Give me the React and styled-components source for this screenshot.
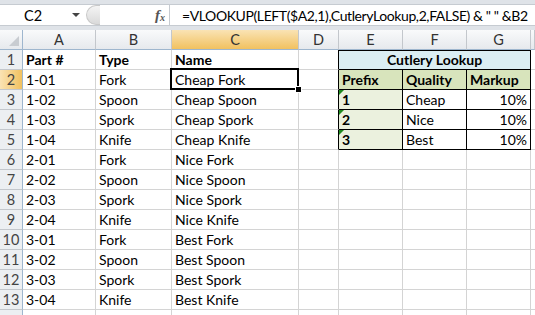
import React from "react";
import styled, { createGlobalStyle, css } from "styled-components";

const GlobalStyle = createGlobalStyle`
  body {
    margin: 0;
    background: #ffffff;
    font-family: Lato, "Open Sans", sans-serif;
    overflow: hidden;
  }
`;

const Container = styled.div`
  width: 535px;
  height: 315px;
  overflow: hidden;
  background: #ffffff;
`;

const TopStrip = styled.div`
  height: 4px;
  background: #dfe3e8;
  border-bottom: 1px solid #c6cbd1;
`;

const FormulaBar = styled.div`
  display: flex;
  height: 20px;
  background: #ffffff;
`;

const NameBox = styled.div`
  width: 86px;
  display: flex;
  align-items: center;
  padding-left: 24px;
  box-sizing: border-box;
  font-size: 14.5px;
  color: #000;
  position: relative;
`;

const DropArrow = styled.span`
  position: absolute;
  left: 72px;
  top: 8px;
  width: 0;
  height: 0;
  border-left: 4px solid transparent;
  border-right: 4px solid transparent;
  border-top: 4px solid #444;
`;

const Splitter = styled.div`
  width: 14px;
  display: flex;
  align-items: center;
`;

const Knob = styled.div`
  width: 14px;
  height: 20px;
  border-radius: 10px 0 0 10px;
  background: linear-gradient(#f4f4f4, #d9d9d9);
  border: 1px solid #c9c9c9;
  border-right: none;
  box-sizing: border-box;
`;

const FxArea = styled.div`
  width: 70px;
  display: flex;
  align-items: center;
  justify-content: flex-end;
  padding-right: 4px;
  box-sizing: border-box;
  font-family: "Liberation Serif", serif;
  font-style: italic;
  font-weight: bold;
  font-size: 15px;
  color: #555;
  border-right: 1px solid #c6cbd1;

  small {
    font-size: 10px;
    position: relative;
    top: 2px;
  }
`;

const FormulaText = styled.div`
  flex: 1;
  display: flex;
  align-items: center;
  padding-left: 12px;
  font-size: 14px;
  letter-spacing: -0.4px;
  color: #000;
  white-space: nowrap;
  overflow: hidden;
`;

const Gap = styled.div`
  height: 4px;
  background: #dfe3e8;
  border-top: 1px solid #c6cbd1;
`;

const Sheet = styled.div`
  display: grid;
  grid-template-columns: 23px 73px 76px 127px 40px 64px 64px 64px 4px;
  grid-auto-rows: 20px;
`;

const headerBase = css`
  box-sizing: border-box;
  display: flex;
  align-items: center;
  justify-content: center;
  font-size: 14.5px;
  color: #333;
  border-right: 1px solid #c3c7cc;
  border-bottom: 1px solid #9eb6ce;
  background: ${(p) =>
    p.$active
      ? "linear-gradient(#fae3b4, #f1c15f)"
      : "linear-gradient(#f9fafb, #e6e9ed)"};
`;

const ColHeader = styled.div`
  ${headerBase}
`;

const RowHeader = styled.div`
  ${headerBase}
  border-bottom: 1px solid #c3c7cc;
  border-right: 1px solid #9eb6ce;
  color: #444;
  background: ${(p) =>
    p.$active
      ? "linear-gradient(90deg, #fae3b4, #f1c15f)"
      : "#eceff2"};
`;

const Corner = styled.div`
  ${headerBase}
  position: relative;
  border-right: 1px solid #9eb6ce;

  &::after {
    content: "";
    position: absolute;
    right: 3px;
    bottom: 3px;
    border-left: 10px solid transparent;
    border-bottom: 10px solid #c8ccd1;
  }
`;

const Cell = styled.div`
  box-sizing: border-box;
  position: relative;
  display: flex;
  align-items: center;
  justify-content: ${(p) =>
    p.$align === "right" ? "flex-end" : p.$align === "center" ? "center" : "flex-start"};
  padding: 0 3px;
  font-size: 14px;
  line-height: 20px;
  color: #000;
  white-space: nowrap;
  overflow: visible;
  font-weight: ${(p) => (p.$bold ? 700 : 400)};
  background: ${(p) => p.$bg || "#ffffff"};
  border-right: 1px solid ${(p) => (p.$edgeR ? "#000" : "#d4d4d4")};
  border-bottom: 1px solid ${(p) => (p.$edgeB ? "#000" : "#d4d4d4")};
  ${(p) => p.$span && `grid-column: span ${p.$span};`}
  ${(p) => p.$edgeT && "box-shadow: inset 0 1px 0 #000;"}

  ${(p) =>
    p.$note &&
    css`
      &::before {
        content: "";
        position: absolute;
        left: 0;
        top: 0;
        border-top: 5px solid #1e8a1e;
        border-right: 5px solid transparent;
      }
    `}

  ${(p) =>
    p.$selected &&
    css`
      &::after {
        content: "";
        position: absolute;
        left: -2px;
        top: -2px;
        right: -1px;
        bottom: -1px;
        border: 2px solid #000;
        pointer-events: none;
      }
    `}
`;

const Handle = styled.span`
  position: absolute;
  right: -4px;
  bottom: -4px;
  width: 5px;
  height: 5px;
  background: #000;
  border: 1px solid #fff;
  z-index: 2;
`;

const parts = [
  ["1-01", "Fork", "Cheap Fork"],
  ["1-02", "Spoon", "Cheap Spoon"],
  ["1-03", "Spork", "Cheap Spork"],
  ["1-04", "Knife", "Cheap Knife"],
  ["2-01", "Fork", "Nice Fork"],
  ["2-02", "Spoon", "Nice Spoon"],
  ["2-03", "Spork", "Nice Spork"],
  ["2-04", "Knife", "Nice Knife"],
  ["3-01", "Fork", "Best Fork"],
  ["3-02", "Spoon", "Best Spoon"],
  ["3-03", "Spork", "Best Spork"],
  ["3-04", "Knife", "Best Knife"],
];

const lookup = [
  ["1", "Cheap", "10%"],
  ["2", "Nice", "10%"],
  ["3", "Best", "10%"],
];

const columns = ["A", "B", "C", "D", "E", "F", "G", ""];

const OLIVE = "#d8e4bc";
const PALE = "#ebf1de";
const BLUE = "#dbeef3";

function lookupCells(r) {
  // r is the sheet row number (1-based)
  if (r === 1) {
    return (
      <Cell $span={3} $bg={BLUE} $bold $align="center" $edgeR $edgeB $edgeT>
        Cutlery Lookup
      </Cell>
    );
  }
  if (r === 2) {
    return (
      <>
        <Cell $bg={OLIVE} $bold $edgeR $edgeB>Prefix</Cell>
        <Cell $bg={OLIVE} $bold $edgeR $edgeB>Quality</Cell>
        <Cell $bg={OLIVE} $bold $edgeR $edgeB>Markup</Cell>
      </>
    );
  }
  const row = lookup[r - 3];
  if (row) {
    return (
      <>
        <Cell $bg={PALE} $bold $note $edgeR $edgeB>{row[0]}</Cell>
        <Cell $edgeR $edgeB>{row[1]}</Cell>
        <Cell $align="right" $edgeR $edgeB>{row[2]}</Cell>
      </>
    );
  }
  return (
    <>
      <Cell />
      <Cell />
      <Cell />
    </>
  );
}

export default function App() {
  const rows = [];
  for (let r = 1; r <= 14; r++) {
    let a = "";
    let b = "";
    let c = "";
    let bold = false;
    if (r === 1) {
      a = "Part #";
      b = "Type";
      c = "Name";
      bold = true;
    } else if (parts[r - 2]) {
      [a, b, c] = parts[r - 2];
    }
    const inTable = r <= 5;
    rows.push(
      <React.Fragment key={r}>
        <RowHeader $active={r === 2}>{r < 14 ? r : ""}</RowHeader>
        <Cell $bold={bold}>{a}</Cell>
        <Cell $bold={bold}>{b}</Cell>
        <Cell $bold={bold} $selected={r === 2}>
          {c}
          {r === 2 && <Handle />}
        </Cell>
        <Cell $edgeR={inTable}></Cell>
        {lookupCells(r)}
        <Cell />
      </React.Fragment>
    );
  }

  return (
    <Container>
      <GlobalStyle />
      <TopStrip />
      <FormulaBar>
        <NameBox>
          C2
          <DropArrow />
        </NameBox>
        <Splitter>
          <Knob />
        </Splitter>
        <FxArea>
          f<small>x</small>
        </FxArea>
        <FormulaText>
          =VLOOKUP(LEFT($A2,1),CutleryLookup,2,FALSE) &amp; " " &amp;B2
        </FormulaText>
      </FormulaBar>
      <Gap />
      <Sheet>
        <Corner />
        {columns.map((col, i) => (
          <ColHeader key={i} $active={col === "C"}>
            {col}
          </ColHeader>
        ))}
        {rows}
      </Sheet>
    </Container>
  );
}
